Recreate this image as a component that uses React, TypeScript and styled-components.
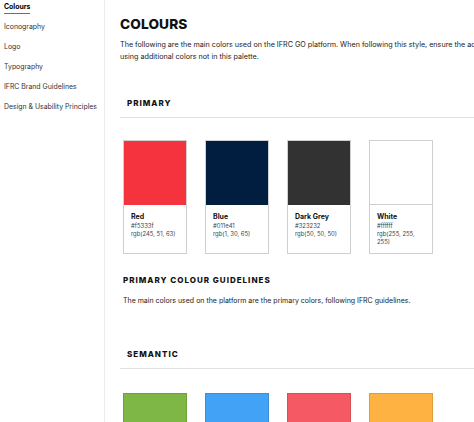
import React from "react";
import styled, { createGlobalStyle } from "styled-components";

const GlobalStyle = createGlobalStyle`
  body {
    margin: 0;
    overflow: hidden;
    background: #ffffff;
    font-family: "Inter", "Open Sans", sans-serif;
    color: #1a1a1a;
  }
`;

type Swatch = {
  name: string;
  hex: string;
  rgb: string;
  color: string;
};

const primary: Swatch[] = [
  { name: "Red", hex: "#f5333f", rgb: "rgb(245, 51, 63)", color: "#f5333f" },
  { name: "Blue", hex: "#011e41", rgb: "rgb(1, 30, 65)", color: "#011e41" },
  { name: "Dark Grey", hex: "#323232", rgb: "rgb(50, 50, 50)", color: "#323232" },
  { name: "White", hex: "#ffffff", rgb: "rgb(255, 255, 255)", color: "#ffffff" },
];

const semantic = ["#7fb746", "#42a2f5", "#f55a64", "#feb241"];

const navItems = [
  "Colours",
  "Iconography",
  "Logo",
  "Typography",
  "IFRC Brand Guidelines",
  "Design & Usability Principles",
];

const Page = styled.div`
  display: flex;
  width: 640px;
  min-height: 422px;
`;

const Sidebar = styled.nav`
  flex: 0 0 auto;
  width: 100px;
  border-right: 1px solid #ececec;
  padding: 1px 0 0 4px;
  display: flex;
  flex-direction: column;
  gap: 7.5px;
`;

const NavLink = styled.a<{ $active?: boolean }>`
  display: block;
  align-self: flex-start;
  font-size: 6.9px;
  line-height: 11.5px;
  color: ${(p) => (p.$active ? "#000" : "#333")};
  font-weight: ${(p) => (p.$active ? 700 : 400)};
  border-bottom: 1.5px solid ${(p) => (p.$active ? "#f5333f" : "transparent")};
  white-space: nowrap;
`;

const Main = styled.main`
  flex: 1;
  padding: 15px 0 0 15px;
`;

const Title = styled.h1`
  margin: 0;
  font-size: 13.7px;
  line-height: 18px;
  font-weight: 800;
  letter-spacing: 0.1px;
  color: #111;
`;

const Lead = styled.p`
  margin: 6px 0 0;
  font-size: 7.2px;
  line-height: 12px;
  color: #222;
  white-space: nowrap;
`;

const SectionHead = styled.div<{ $top: number }>`
  margin-top: ${(p) => p.$top}px;
  padding: 0 7px 9px;
  border-bottom: 1px solid #e2e2e2;
  font-size: 8px;
  line-height: 10px;
  font-weight: 800;
  letter-spacing: 1px;
  color: #111;
`;

const Cards = styled.div<{ $top: number }>`
  display: flex;
  gap: 18px;
  margin-top: ${(p) => p.$top}px;
  padding-left: 3px;
`;

const Card = styled.div`
  width: 64px;
  border: 1px solid #cfcfcf;
  box-sizing: border-box;
  height: 114px;
  display: flex;
  flex-direction: column;
`;

const Chip = styled.div<{ $color: string; $bordered?: boolean }>`
  height: 63px;
  background: ${(p) => p.$color};
  border-bottom: 1px solid ${(p) => (p.$bordered ? "#cfcfcf" : p.$color)};
`;

const Info = styled.div`
  padding: 8px 7px 0;
  font-size: 5.9px;
  line-height: 8px;
  color: #444;
`;

const Name = styled.div`
  font-size: 7px;
  font-weight: 700;
  color: #111;
  margin-bottom: 1px;
`;

const SubHead = styled.h2`
  margin: 21px 0 0 3px;
  font-size: 8px;
  line-height: 10px;
  font-weight: 800;
  letter-spacing: 1px;
  color: #111;
`;

const Note = styled.p`
  margin: 10px 0 0 3px;
  font-size: 7px;
  line-height: 12px;
  color: #222;
`;

const SemanticChip = styled.div<{ $color: string }>`
  width: 64px;
  height: 40px;
  box-sizing: border-box;
  background: ${(p) => p.$color};
  border: 1px solid rgba(0, 0, 0, 0.12);
`;

export default function App() {
  return (
    <>
      <GlobalStyle />
      <Page>
        <Sidebar>
          {navItems.map((item, i) => (
            <NavLink key={item} $active={i === 0}>
              {item}
            </NavLink>
          ))}
        </Sidebar>
        <Main>
          <Title>COLOURS</Title>
          <Lead>
            The following are the main colors used on the IFRC GO platform. When following this
            style, ensure the adherence to these colours and avoid
            <br />
            using additional colors not in this palette.
          </Lead>
          <SectionHead $top={35}>PRIMARY</SectionHead>
          <Cards $top={22}>
            {primary.map((s) => (
              <Card key={s.name}>
                <Chip $color={s.color} $bordered={s.name === "White"} />
                <Info>
                  <Name>{s.name}</Name>
                  <div>{s.hex}</div>
                  <div>{s.rgb}</div>
                </Info>
              </Card>
            ))}
          </Cards>
          <SubHead>PRIMARY COLOUR GUIDELINES</SubHead>
          <Note>
            The main colors used on the platform are the primary colors, following IFRC guidelines.
          </Note>
          <SectionHead $top={42}>SEMANTIC</SectionHead>
          <Cards $top={24}>
            {semantic.map((c) => (
              <SemanticChip key={c} $color={c} />
            ))}
          </Cards>
        </Main>
      </Page>
    </>
  );
}
